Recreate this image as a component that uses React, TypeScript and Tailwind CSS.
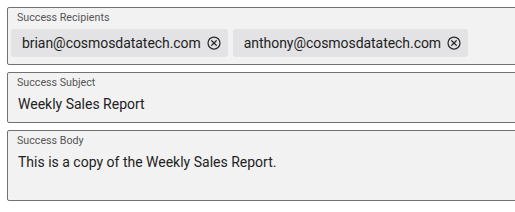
import React from "react";

const recipients = ["brian@cosmosdatatech.com", "anthony@cosmosdatatech.com"];

function CloseCircle() {
  return (
    <svg width="14" height="14" viewBox="0 0 14 14" className="shrink-0 text-[#2a2a2a]">
      <circle cx="7" cy="7" r="6" fill="none" stroke="currentColor" strokeWidth="1.25" />
      <path d="M4.7 4.7 L9.3 9.3 M9.3 4.7 L4.7 9.3" stroke="currentColor" strokeWidth="1.25" strokeLinecap="round" />
    </svg>
  );
}

function Field({ label, children, className = "" }: { label: string; children: React.ReactNode; className?: string }) {
  return (
    <div className={`w-[512px] rounded-[2px] border border-[#717171] bg-[#f2f2f2] pl-[9px] pt-[3px] ${className}`}>
      <div className="text-[10.7px] leading-[13px] text-[#555555]">{label}</div>
      {children}
    </div>
  );
}

export default function App() {
  return (
    <div
      className="w-[515px] h-[212px] overflow-hidden bg-white pl-[7px] pt-[7px] flex flex-col gap-[7px]"
      style={{ fontFamily: "Roboto, 'Liberation Sans', sans-serif" }}
    >
      <Field label="Success Recipients" className="h-[58px]">
        <div className="mt-[5px] -ml-[6px] flex gap-[5px]">
          {recipients.map((r) => (
            <div key={r} className="flex h-[28px] items-center gap-[6px] rounded-[3px] bg-[#e3e3e5] pl-[11px] pr-[7px]">
              <span className="text-[14px] tracking-[-0.05px] text-[#222222]">{r}</span>
              <CloseCircle />
            </div>
          ))}
        </div>
      </Field>
      <Field label="Success Subject" className="h-[51px]">
        <div className="mt-[5px] pl-px text-[14px] leading-[20px] text-[#222222]">Weekly Sales Report</div>
      </Field>
      <Field label="Success Body" className="h-[71px]">
        <div className="mt-[5px] pl-px text-[14px] leading-[20px] text-[#222222]">This is a copy of the Weekly Sales Report.</div>
      </Field>
    </div>
  );
}
